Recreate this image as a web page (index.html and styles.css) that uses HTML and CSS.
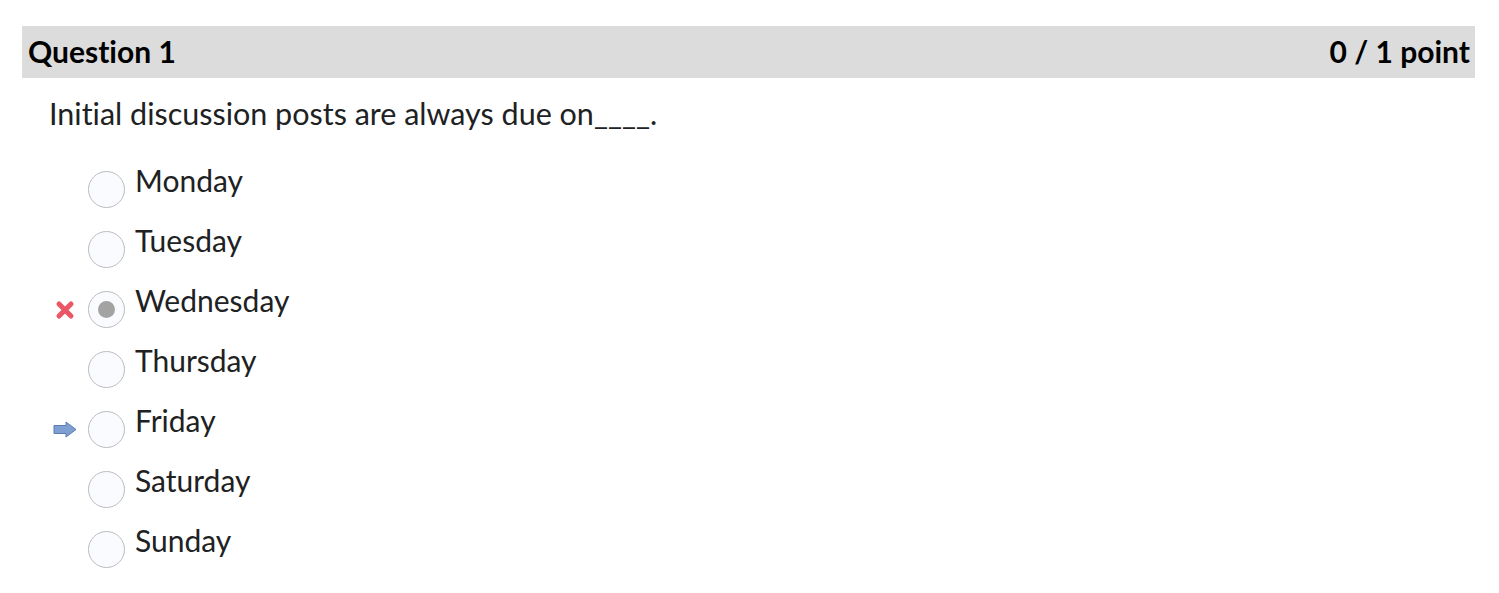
FILE: index.html
```html
<!DOCTYPE html>
<html lang="en">
<head>
    <meta charset="UTF-8">
    <title>Question 1</title>
    <link rel="stylesheet" href="styles.css">
</head>
<body>
    <div class="question">
        <div class="question-header">
            <span class="question-title">Question 1</span>
            <span class="question-score">0 / 1 point</span>
        </div>
        <div class="question-text">Initial discussion posts are always due on____.</div>
        <ul class="options">
            <li class="option">
                <span class="marker"></span>
                <span class="radio"></span>
                <span class="label">Monday</span>
            </li>
            <li class="option">
                <span class="marker"></span>
                <span class="radio"></span>
                <span class="label">Tuesday</span>
            </li>
            <li class="option">
                <span class="marker">
                    <svg class="icon-wrong" width="20" height="20" viewBox="0 0 20 20">
                        <path d="M4 4 L16 16 M16 4 L4 16" stroke="#ea5663" stroke-width="5" stroke-linecap="round" fill="none"/>
                    </svg>
                </span>
                <span class="radio checked"></span>
                <span class="label">Wednesday</span>
            </li>
            <li class="option">
                <span class="marker"></span>
                <span class="radio"></span>
                <span class="label">Thursday</span>
            </li>
            <li class="option">
                <span class="marker">
                    <svg class="icon-correct" width="24" height="17" viewBox="0 0 24 17">
                        <path d="M1 4.5 H13 V1 L23 8.5 L13 16 V12.5 H1 Z" fill="#7f9ed2" stroke="#5a7bb3" stroke-width="1" stroke-linejoin="round"/>
                    </svg>
                </span>
                <span class="radio"></span>
                <span class="label">Friday</span>
            </li>
            <li class="option">
                <span class="marker"></span>
                <span class="radio"></span>
                <span class="label">Saturday</span>
            </li>
            <li class="option">
                <span class="marker"></span>
                <span class="radio"></span>
                <span class="label">Sunday</span>
            </li>
        </ul>
    </div>
</body>
</html>
```

FILE: styles.css
```css
body {
    margin: 0;
    font-family: Lato, "Noto Sans", sans-serif;
    font-variant-ligatures: none;
    color: #202122;
    background: #fff;
}
.question {
    padding: 26px 24px 0 22px;
}
.question-header {
    display: flex;
    justify-content: space-between;
    align-items: center;
    box-sizing: border-box;
    height: 52px;
    padding: 0 5px 3px 6px;
    background: #dcdcdc;
    font-weight: bold;
    font-size: 30px;
    color: #000;
}
.question-text {
    font-size: 30.5px;
    line-height: 36px;
    padding: 17px 0 0 27px;
}
.options {
    list-style: none;
    margin: 0;
    padding: 31px 0 0 26px;
}
.option {
    display: flex;
    align-items: flex-start;
    height: 60px;
}
.marker {
    width: 34px;
    margin-right: 6px;
    height: 37px;
    margin-top: 9px;
    display: flex;
    align-items: center;
    justify-content: center;
}
.radio {
    box-sizing: border-box;
    width: 37px;
    height: 37px;
    margin-top: 9px;
    border: 1px solid #bdbdbd;
    border-radius: 50%;
    background: #f9fbff;
    display: flex;
    align-items: center;
    justify-content: center;
}
.radio.checked::after {
    content: "";
    width: 17px;
    height: 17px;
    border-radius: 50%;
    background: #a3a3a3;
}
.label {
    font-size: 30px;
    line-height: 36px;
    margin-left: 10px;
}
```
